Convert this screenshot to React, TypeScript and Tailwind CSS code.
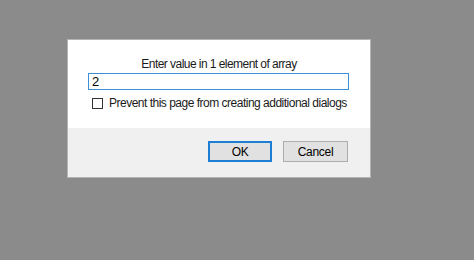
export default function App() {
  return (
    <div
      className="w-[474px] h-[260px] bg-[#8b8b8b] pt-[39px] pl-[67px]"
      style={{ fontFamily: '"Liberation Sans", Arial, sans-serif' }}
    >
      <div className="w-[304px] h-[139px] border border-[#b4b4b4] bg-white flex flex-col">
        <div className="h-[88px] px-[20px] pt-[16px] flex flex-col">
          <div className="text-[12px] leading-[16px] tracking-[-0.55px] text-[#1a1a1a] text-center whitespace-nowrap">
            Enter value in 1 element of array
          </div>
          <input
            defaultValue="2"
            className="mt-[1px] w-[261px] h-[17px] border border-[#3b8fd6] px-[3px] text-[13px] leading-[15px] text-black outline-none"
          />
          <label className="mt-[6px] ml-[4px] flex items-center gap-[6px] text-[12px] leading-[14px] tracking-[-0.5px] text-[#1a1a1a] whitespace-nowrap">
            <span className="w-[11px] h-[11px] shrink-0 border border-[#333] bg-white" />
            Prevent this page from creating additional dialogs
          </label>
        </div>
        <div className="flex-1 bg-[#f0f0f0] flex justify-end items-start pt-[13px] pr-[22px] gap-[11px]">
          <button className="w-[64px] h-[21px] bg-[#e1e1e1] border-2 border-[#1d7fd4] text-[12px] leading-[16px] tracking-[-0.3px] text-black">
            OK
          </button>
          <button className="w-[65px] h-[21px] bg-[#e1e1e1] border border-[#adadad] text-[12px] leading-[16px] tracking-[-0.3px] text-black">
            Cancel
          </button>
        </div>
      </div>
    </div>
  );
}
